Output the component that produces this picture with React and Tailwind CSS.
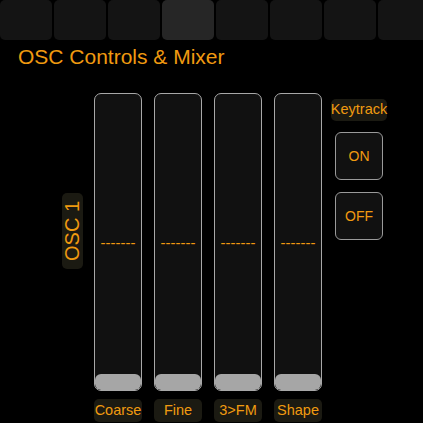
import React from "react";

const tabs = [0, 1, 2, 3, 4, 5, 6, 7];
const faders = ["Coarse", "Fine", "3>FM", "Shape"];

function Fader({ label }) {
  return (
    <div className="flex flex-col items-stretch w-[48px] gap-[8px]">
      <div className="relative h-[298px] rounded-[7px] border-[1.5px] border-[#a8a8a8] bg-[#111111] flex items-center justify-center overflow-hidden">
        <span className="text-[15px] leading-none text-[#f09a10]">-------</span>
        <div className="absolute left-0 right-0 bottom-0 h-[16px] rounded-[6px] bg-[#a6a6a6]" />
      </div>
      <div className="h-[23px] rounded-[5px] bg-[#1b1a12] flex items-center justify-center text-[14.5px] text-[#f09a10]">
        {label}
      </div>
    </div>
  );
}

export default function App() {
  return (
    <div
      className="w-[423px] h-[423px] bg-black overflow-hidden flex flex-col"
      style={{ fontFamily: '"Liberation Sans", Arial, sans-serif' }}
    >
      {/* tab strip */}
      <div className="flex gap-[2.5px] h-[40px] shrink-0">
        {tabs.map((t) => (
          <div
            key={t}
            className={
              t === 3
                ? "w-[51.5px] shrink-0 rounded-[5px] bg-[#262626]"
                : "w-[51.5px] shrink-0 rounded-[5px] bg-[#141414]"
            }
          />
        ))}
      </div>

      <h1 className="mt-[4px] ml-[18px] text-[21px] leading-[25px] text-[#f09a10]">
        OSC Controls &amp; Mixer
      </h1>

      <div className="flex items-start mt-[24px] pl-[62px]">
        <div className="mt-[100px] w-[21px] h-[76px] rounded-[5px] bg-[#1b1a12] flex items-center justify-center">
          <span className="-rotate-90 whitespace-nowrap text-[20px] text-[#f09a10]">OSC 1</span>
        </div>

        <div className="flex gap-[12px] ml-[11px]">
          {faders.map((f) => (
            <Fader key={f} label={f} />
          ))}
        </div>

        <div className="ml-[9px] mt-[6px] flex flex-col items-center w-[56px]">
          <div className="h-[22px] w-[56px] rounded-[5px] bg-[#1b1a12] flex items-center justify-center text-[14.5px] text-[#f09a10]">
            Keytrack
          </div>
          <button className="mt-[11px] w-[48px] h-[48px] rounded-[6px] border-[1.5px] border-[#9a9a9a] bg-[#111111] text-[14px] text-[#f09a10]">
            ON
          </button>
          <button className="mt-[12px] w-[48px] h-[48px] rounded-[6px] border-[1.5px] border-[#9a9a9a] bg-[#111111] text-[14px] text-[#f09a10]">
            OFF
          </button>
        </div>
      </div>
    </div>
  );
}
